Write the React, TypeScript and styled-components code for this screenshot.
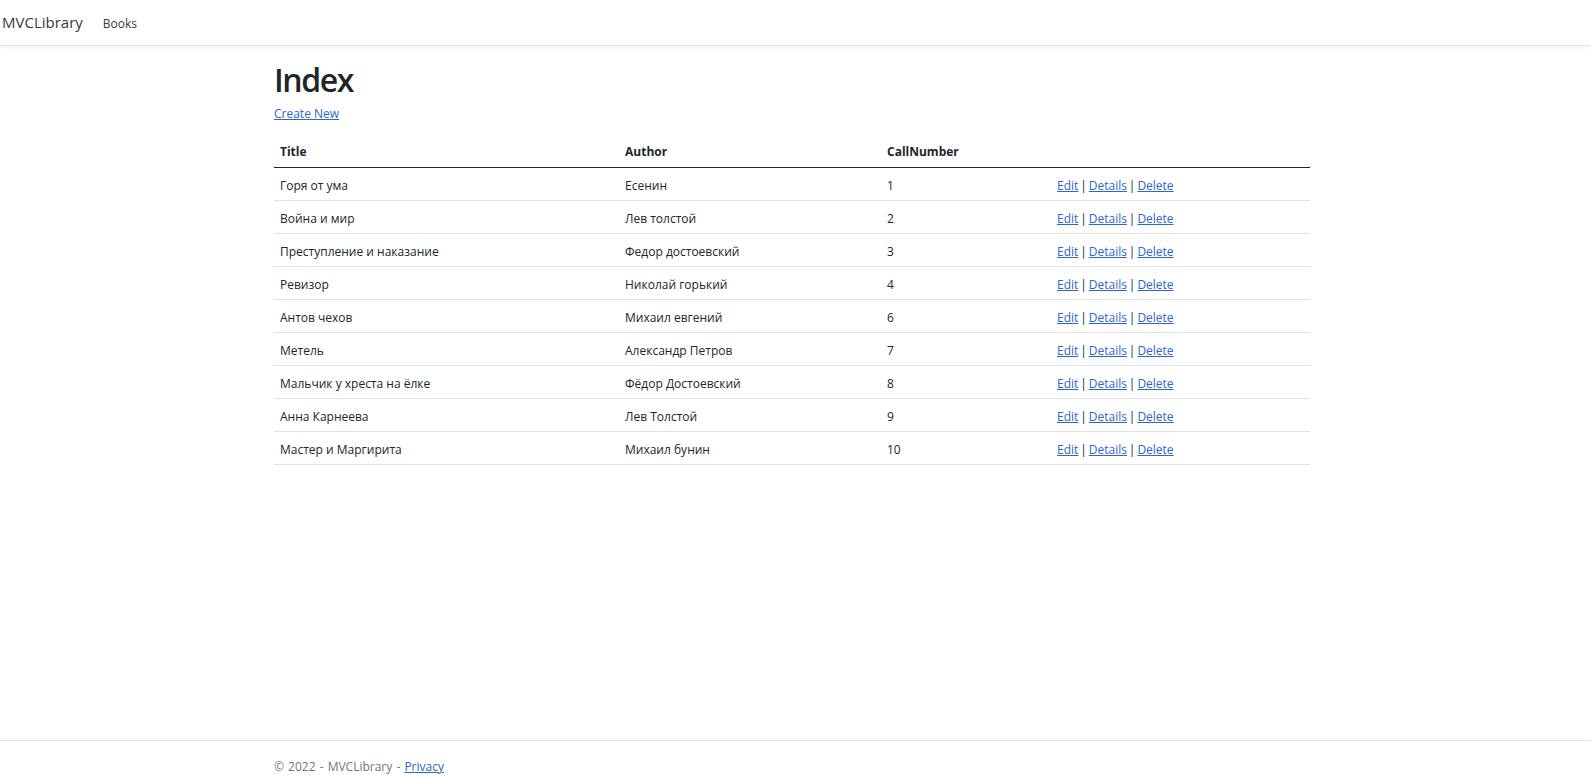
import React from 'react'
import styled, { createGlobalStyle } from 'styled-components'

const GlobalStyle = createGlobalStyle`
    html, body { margin: 0; padding: 0; background: #fff; }
    body {
        font-family: "Open Sans", "Noto Sans", "DejaVu Sans", sans-serif;
        font-size: 12px;
        line-height: 18px;
        color: #212529;
    }
`

const Page = styled.div`
    height: 775px;
    display: flex;
    flex-direction: column;
    overflow: hidden;
`

const NavBar = styled.header`
    height: 45px;
    line-height: 44px;
    display: flex;
    align-items: baseline;
    flex-shrink: 0;
    border-bottom: 1px solid #e5e5e5;
    box-shadow: 0 2px 4px rgba(0, 0, 0, 0.05);
    padding-left: 2px;
`

const Brand = styled.a`
    font-size: 15px;
    color: #343a40;
    margin-right: 20px;
`

const NavLink = styled.a`
    font-size: 12px;
    color: #343a40;
`

const Main = styled.main`
    flex: 1;
    width: 1036px;
    margin-left: 274px;
    padding-top: 15px;
`

const Heading = styled.h1`
    margin: 0 0 6px;
    font-size: 32px;
    line-height: 38px;
    font-weight: 600;
    letter-spacing: -1.4px;
`

const Link = styled.a`
    color: #2b66cc;
    text-decoration: underline;
`

const Table = styled.table`
    width: 100%;
    margin-top: 13px;
    border-collapse: collapse;
    table-layout: fixed;
`

const HeadCell = styled.th<{ $width: number }>`
    box-sizing: border-box;
    width: ${(p) => p.$width}px;
    height: 31px;
    padding: 2px 6px 0;
    text-align: left;
    font-weight: 700;
    border-bottom: 1px solid #212529;
`

const Cell = styled.td`
    box-sizing: border-box;
    height: 33px;
    padding: 4px 6px 0;
    border-bottom: 1px solid #dee2e6;
`

const Actions = styled(Cell)`
    word-spacing: -1.2px;
`

const Footer = styled.footer`
    box-sizing: border-box;
    height: 35px;
    flex-shrink: 0;
    border-top: 1px solid #dee2e6;
    padding: 17px 0 0 274px;
    color: #6c757d;
    white-space: pre;
    word-spacing: 1px;
`

const BOOKS = [
    { title: 'Горя от ума', author: 'Есенин', callNumber: 1 },
    { title: 'Война и мир', author: 'Лев толстой', callNumber: 2 },
    { title: 'Преступление и наказание', author: 'Федор достоевский', callNumber: 3 },
    { title: 'Ревизор', author: 'Николай горький', callNumber: 4 },
    { title: 'Антов чехов', author: 'Михаил евгений', callNumber: 6 },
    { title: 'Метель', author: 'Александр Петров', callNumber: 7 },
    { title: 'Мальчик у хреста на ёлке', author: 'Фёдор Достоевский', callNumber: 8 },
    { title: 'Анна Карнеева', author: 'Лев Толстой', callNumber: 9 },
    { title: 'Мастер и Маргирита', author: 'Михаил бунин', callNumber: 10 },
]

const App: React.FC = () => (
    <Page>
        <GlobalStyle />
        <NavBar>
            <Brand>MVCLibrary</Brand>
            <NavLink>Books</NavLink>
        </NavBar>
        <Main>
            <Heading>Index</Heading>
            <Link href="#">Create New</Link>
            <Table>
                <thead>
                    <tr>
                        <HeadCell $width={345}>Title</HeadCell>
                        <HeadCell $width={262}>Author</HeadCell>
                        <HeadCell $width={170}>CallNumber</HeadCell>
                        <HeadCell $width={259} />
                    </tr>
                </thead>
                <tbody>
                    {BOOKS.map((book) => (
                        <tr key={book.callNumber}>
                            <Cell>{book.title}</Cell>
                            <Cell>{book.author}</Cell>
                            <Cell>{book.callNumber}</Cell>
                            <Actions>
                                <Link href="#">Edit</Link> | <Link href="#">Details</Link> |{' '}
                                <Link href="#">Delete</Link>
                            </Actions>
                        </tr>
                    ))}
                </tbody>
            </Table>
        </Main>
        <Footer>
            © 2022 - MVCLibrary - <Link href="#">Privacy</Link>
        </Footer>
    </Page>
)

export default App
